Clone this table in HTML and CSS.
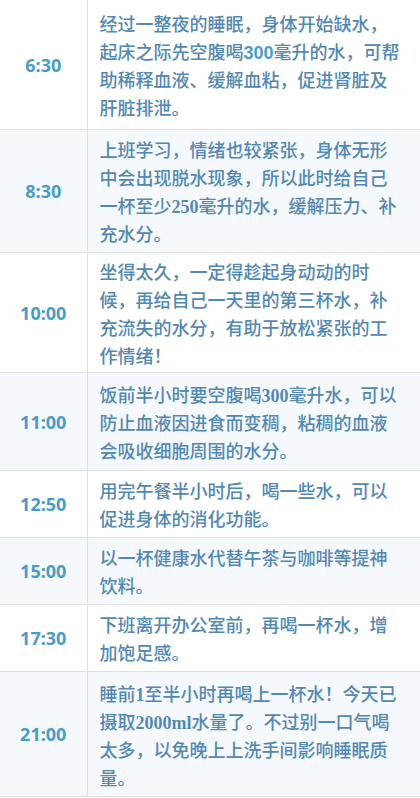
FILE: index.html
```html
<!DOCTYPE html>
<html lang="zh-CN">
<head>
  <meta charset="UTF-8" />
  <title>一天喝水时间表</title>
  <link rel="stylesheet" href="styles.css">
</head>
<body>
<table class="water-table">
  <colgroup>
    <col class="col-time">
    <col class="col-text">
  </colgroup>
  <tr class="first">
    <td class="time">6:30</td>
    <td class="text">经过一整夜的睡眠，身体开始缺水，起床之际先空腹喝<b class="num-bold">300</b>毫升的水，可帮助稀释血液、缓解血粘，促进肾脏及肝脏排泄。</td>
  </tr>
  <tr class="alt">
    <td class="time">8:30</td>
    <td class="text">上班学习，情绪也较紧张，身体无形中会出现脱水现象，所以此时给自己一杯至少<span class="num">250</span>毫升的水，缓解压力、补充水分。</td>
  </tr>
  <tr class="third">
    <td class="time">10:00</td>
    <td class="text">坐得太久，一定得趁起身动动的时候，再给自己一天里的第三杯水，补充流失的水分，有助于放松紧张的工作情绪！</td>
  </tr>
  <tr class="alt fourth">
    <td class="time">11:00</td>
    <td class="text">饭前半小时要空腹喝<span class="num">300</span>毫升水，可以防止血液因进食而变稠，粘稠的血液会吸收细胞周围的水分。</td>
  </tr>
  <tr>
    <td class="time">12:50</td>
    <td class="text">用完午餐半小时后，喝一些水，可以促进身体的消化功能。</td>
  </tr>
  <tr class="alt">
    <td class="time">15:00</td>
    <td class="text">以一杯健康水代替午茶与咖啡等提神饮料。</td>
  </tr>
  <tr>
    <td class="time">17:30</td>
    <td class="text">下班离开办公室前，再喝一杯水，增加饱足感。</td>
  </tr>
  <tr class="alt last">
    <td class="time">21:00</td>
    <td class="text">睡前<span class="num">1</span>至半小时再喝上一杯水！今天已摄取<span class="num">2000ml</span>水量了。不过别一口气喝太多，以免晚上上洗手间影响睡眠质量。</td>
  </tr>
</table>
</body>
</html>
```

FILE: styles.css
```css
* {
  margin: 0;
  padding: 0;
  box-sizing: border-box;
}
body {
  background: #fff;
  font-family: "Noto Sans CJK SC", sans-serif;
  overflow: hidden;
}
.water-table {
  width: 420px;
  border-collapse: collapse;
  table-layout: fixed;
}
.col-time {
  width: 87px;
}
.water-table tr {
  border-bottom: 1px solid #dce1e7;
}
.water-table tr.alt {
  background: #f5f9fd;
}
.time {
  border-right: 1px solid #dce1e7;
  text-align: center;
  vertical-align: middle;
  font-family: "Open Sans", sans-serif;
  font-weight: bold;
  font-size: 18px;
  color: #4a9cc7;
}
.text {
  padding: 5px 18px 5px 12px;
  font-size: 18px;
  font-weight: 500;
  line-height: 28px;
  color: #5388b2;
}
.first .text {
  padding-top: 9px;
  padding-bottom: 8px;
}
.third .text {
  padding-top: 4px;
  padding-bottom: 3px;
}
.fourth .text {
  padding-top: 7px;
  padding-bottom: 6px;
}
.last .text {
  padding-top: 7px;
}
.num {
  font-family: "Liberation Serif", serif;
  font-weight: bold;
  line-height: 1;
}
.num-bold {
  font-family: "Liberation Sans", sans-serif;
  font-weight: bold;
  line-height: 1;
  color: #4a9cc7;
}
```
